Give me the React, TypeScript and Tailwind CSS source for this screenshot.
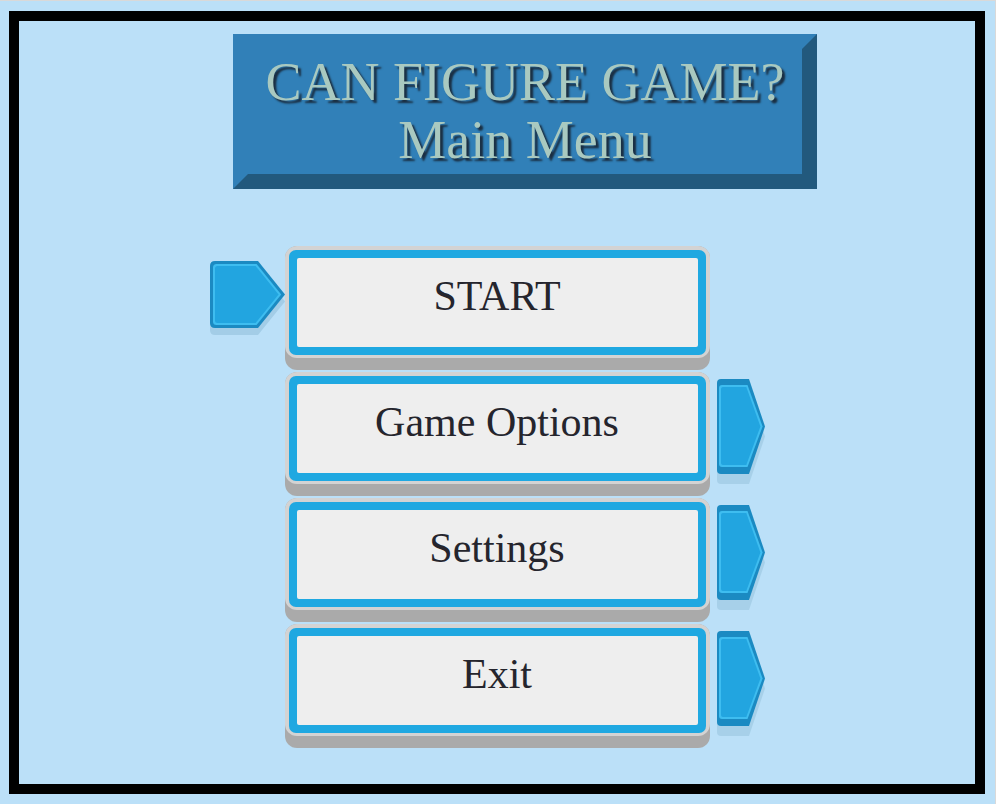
import React from "react"

const serif = "font-['Liberation_Serif','Times_New_Roman',serif]"

// arrow tab pointing right, used beside the selected entry
function StartMarker() {
    return (
        <svg width="75" height="75" viewBox="0 0 75 75">
            <path transform="translate(0 7)" d="M5,0 H48 L75,33.5 L48,67 H5 Q0,67 0,62 V5 Q0,0 5,0 Z" fill="#a3cde7" />
            <path d="M5,0 H48 L75,33.5 L48,67 H5 Q0,67 0,62 V5 Q0,0 5,0 Z" fill="#1b8ac2" />
            <path d="M6.5,3 H46.6 L71.2,33.5 L46.6,64 H6.5 Q3,64 3,60.5 V6.5 Q3,3 6.5,3 Z" fill="#3ebdf0" />
            <path d="M7.5,5 H45.6 L68.6,33.5 L45.6,62 H7.5 Q5,62 5,59.5 V7.5 Q5,5 7.5,5 Z" fill="#22a5e0" />
        </svg>
    )
}

// smaller tab on the right of the other entries
function SideMarker() {
    return (
        <svg width="48" height="106" viewBox="0 0 48 106">
            <path transform="translate(0 10)" d="M4,0 H32 L48,47.5 L32,95 H4 Q0,95 0,91 V4 Q0,0 4,0 Z" fill="#a7d0e9" />
            <path d="M4,0 H32 L48,47.5 L32,95 H4 Q0,95 0,91 V4 Q0,0 4,0 Z" fill="#1b8ac2" />
            <path d="M5,6 H30.5 L45.6,47.5 L30.5,88 H5 Q2,88 2,85 V9 Q2,6 5,6 Z" fill="#3ebdf0" />
            <path d="M6,8 H29.3 L43.4,47.5 L29.3,86 H6 Q4,86 4,84 V10 Q4,8 6,8 Z" fill="#22a5e0" />
        </svg>
    )
}

function MenuButton({ label }: { label: string }) {
    return (
        <div className="w-[425px] rounded-[12px] bg-[#aaaaaa] pb-[12px]">
            <div className="rounded-[12px] bg-[#d3d3d3] px-[4px] pt-[4px] pb-[3px]">
                <div className="rounded-[7px] bg-[#1fa8e1] p-[8px]">
                    <div className={`h-[89px] rounded-[2px] bg-[#eeeeee] pt-[14px] text-center text-[42px] leading-[48px] text-[#25252d] ${serif}`}>
                        {label}
                    </div>
                </div>
            </div>
        </div>
    )
}

const items = [
    { label: "START", selected: true },
    { label: "Game Options", selected: false },
    { label: "Settings", selected: false },
    { label: "Exit", selected: false },
]

export default function App() {
    return (
        <div className="h-screen w-full bg-[#bbe0f8] border-t border-r border-[#d9d9d9] pt-[10px] pl-[9px] pr-[10px] pb-[10px] flex">
            <div className="flex-1 flex flex-col border-[10px] border-black bg-[#bbe0f8]">
                <div className="self-start ml-[214px] mt-[13px] w-[584px] border-[15px] border-t-[#3180b8] border-l-[#3180b8] border-r-[#22597d] border-b-[#22597d] bg-[#3180b8] pt-[4px] pb-[5px]">
                    <h1 className={`text-center text-[54px] leading-[58px] text-[#a9c9c0] [text-shadow:3px_3px_2px_#1a2e42] ${serif}`}>
                        CAN FIGURE GAME?<br />Main Menu
                    </h1>
                </div>

                <div className="mt-[57px] grid grid-cols-[1fr_auto_1fr] gap-y-[2px]">
                    {items.map((item) => (
                        <React.Fragment key={item.label}>
                            <div className="flex justify-end items-start">
                                {item.selected && <div className="mt-[15px]"><StartMarker /></div>}
                            </div>
                            <MenuButton label={item.label} />
                            <div className="flex items-start pl-[7px]">
                                {!item.selected && <div className="mt-[7px]"><SideMarker /></div>}
                            </div>
                        </React.Fragment>
                    ))}
                </div>
            </div>
        </div>
    )
}
